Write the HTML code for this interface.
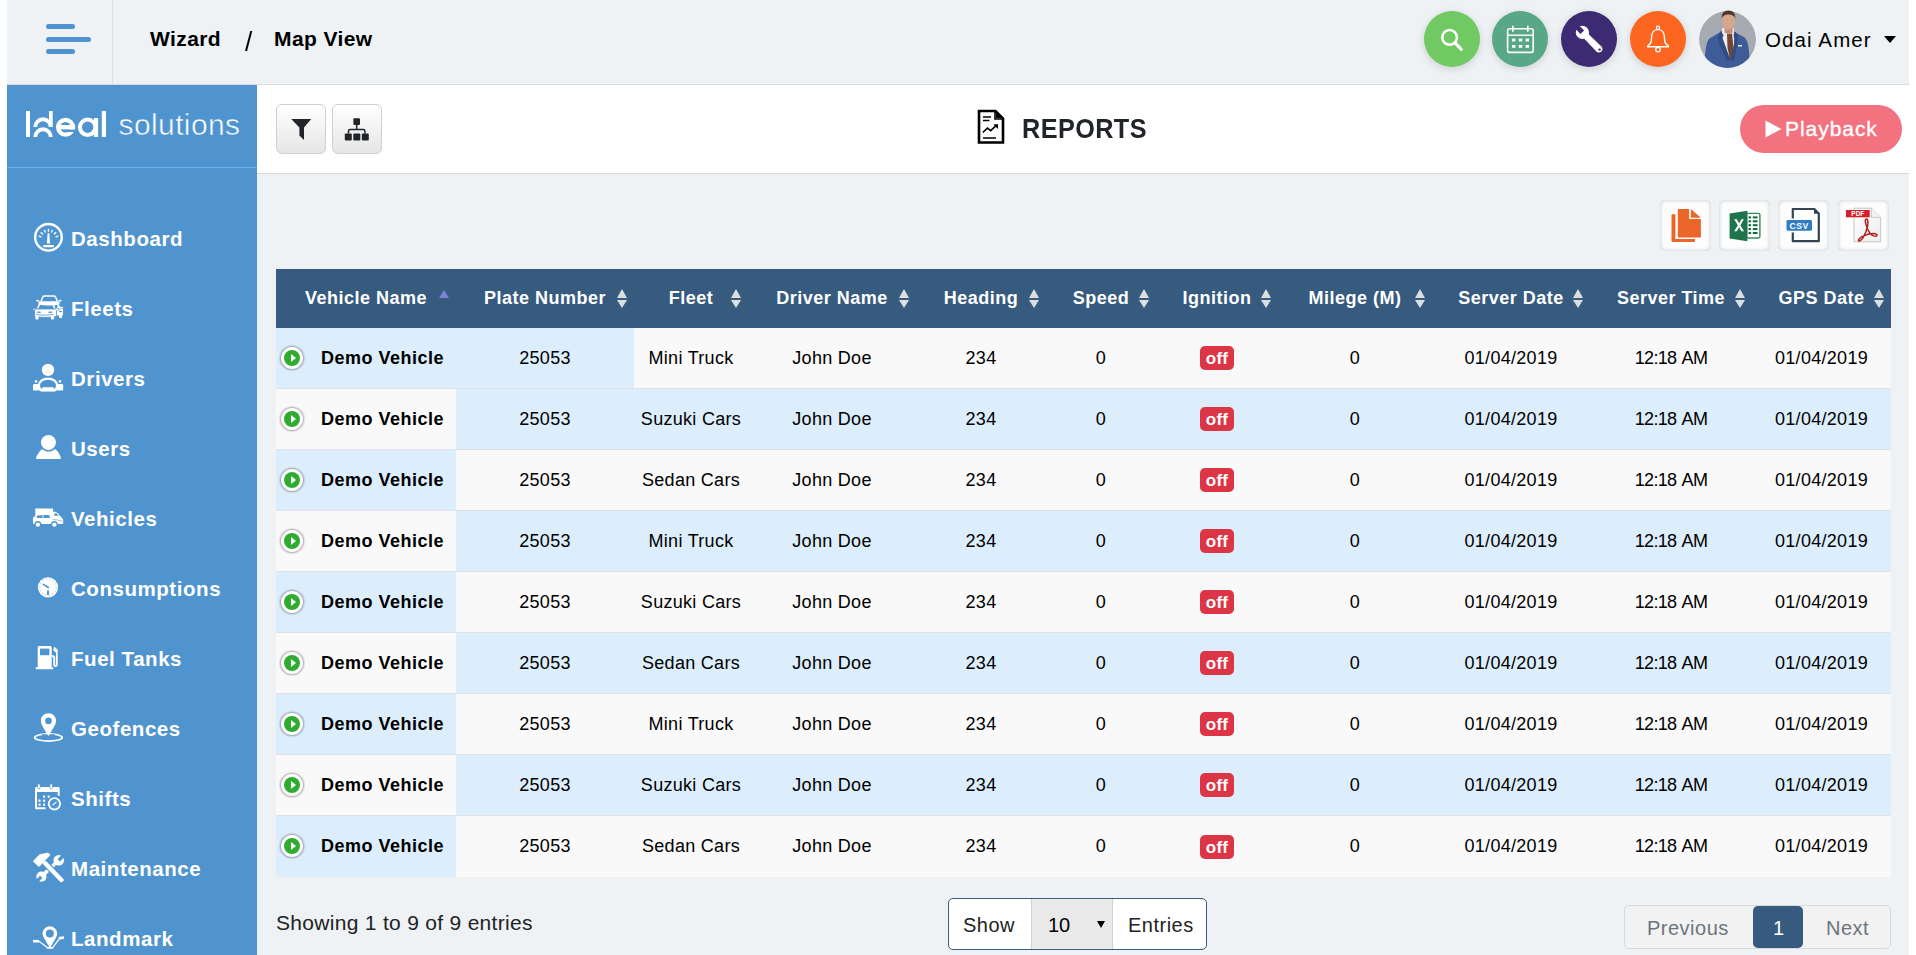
<!DOCTYPE html>
<html><head><meta charset="utf-8">
<style>
*{box-sizing:border-box;margin:0;padding:0}
html,body{width:1916px;height:955px;overflow:hidden;background:#fff;font-family:"Liberation Sans",sans-serif;color:#000}
.abs{position:absolute}
#hdr{position:absolute;left:7px;top:0;width:1902px;height:85px;background:#eef2f5;border-bottom:1px solid #d9dcde}
#hdr .vdiv{position:absolute;left:105px;top:0;width:1px;height:84px;background:#dcdfe2}
.ham{position:absolute;left:39px;height:5px;border-radius:2.5px;background:#4f93d0}
.crumb{position:absolute;top:27px;font-size:21px;font-weight:700;color:#000;white-space:nowrap;letter-spacing:.4px}
.circ{position:absolute;top:11px;width:56px;height:56px;border-radius:50%;box-shadow:0 2px 9px rgba(0,0,0,.14)}
.circ svg{position:absolute;left:0;top:0}
#side{position:absolute;left:7px;top:85px;width:250px;height:870px;background:#4f94cf}
#side .logo{position:absolute;left:0;top:0;width:250px;height:83px;border-bottom:1px solid #6ab3f1}
.mi{position:absolute;left:0;width:250px;height:40px}
.mi svg{position:absolute;left:26px;top:4px}
.mi span{position:absolute;left:64px;top:9.5px;font-size:20.5px;font-weight:700;color:#fff;white-space:nowrap;letter-spacing:.55px}
#topbar{position:absolute;left:257px;top:85px;width:1652px;height:89px;background:#fff;border-bottom:1px solid #dadada}
.tbtn{position:absolute;top:19px;width:50px;height:50px;border:1px solid #cfcfcf;border-radius:6px;background:linear-gradient(#fff,#e6e6e6)}
#content{position:absolute;left:257px;top:174px;width:1652px;height:781px;background:#eef2f5}
.xbtn{position:absolute;top:200px;width:51px;height:51px;background:#fdfdfd;border-radius:5px;box-shadow:inset 0 0 4px rgba(0,0,0,.22)}
.xbtn svg{position:absolute;left:0;top:0}
table{position:absolute;left:276px;top:269px;width:1615px;border-collapse:separate;border-spacing:0;table-layout:fixed}
th{height:59px;background:#365b7e;color:#fff;font-size:18px;font-weight:700;text-align:center;position:relative;white-space:nowrap;letter-spacing:.5px;padding:0}
td{height:61px;border-bottom:1px solid #dee2e6;font-size:18px;text-align:center;white-space:nowrap;color:#000;letter-spacing:.3px}
tr.o td{background:#f9f9f9}
tr.o td.b{background:#dcedfc}
tr.e td{background:#dcedfc}
tr.e td.g{background:#f9f9f9}
td.nm{font-weight:700;text-align:left;padding-left:45px;position:relative;letter-spacing:.5px}
.play{position:absolute;left:5px;top:19px;width:22px;height:22px;border-radius:50%;background:#fff;box-shadow:0 0 2px 1px rgba(0,0,0,.35)}
.play:before{content:"";position:absolute;left:3px;top:3px;width:16px;height:16px;border-radius:50%;background:#2fac2f}
.play:after{content:"";position:absolute;left:9.5px;top:7px;border-left:5.5px solid #fff;border-top:4px solid transparent;border-bottom:4px solid transparent}
.off{display:inline-block;background:#dc3545;color:#fff;font-weight:700;font-size:17px;border-radius:5px;padding:3px 6px 1px 6px;letter-spacing:.2px}
tbody tr:last-child td{border-bottom:none}
.asc{position:absolute;right:7px;top:21px;border-bottom:8.5px solid #7f80dc;border-left:5px solid transparent;border-right:5px solid transparent}
.sort{position:absolute;right:6px;top:20px;width:11px;height:19px}
.sort:before{content:"";position:absolute;left:0;top:0;border-bottom:9px solid #dcdedf;border-left:5.5px solid transparent;border-right:5.5px solid transparent}
.sort:after{content:"";position:absolute;left:0;top:10.8px;border-top:8.5px solid #dcdedf;border-left:5.5px solid transparent;border-right:5.5px solid transparent}
</style></head><body>

<div id="hdr">
  <div class="ham" style="top:24px;width:29px"></div>
  <div class="ham" style="top:37px;width:45px"></div>
  <div class="ham" style="top:49px;width:29px"></div>
  <div class="vdiv"></div>
</div>
<div class="crumb" style="left:150px">Wizard</div>
<div class="crumb" style="left:244.5px;top:25px;font-weight:400;font-size:25px;transform:scale(1.05,1.12);transform-origin:0 0">/</div>
<div class="crumb" style="left:274px">Map View</div>

<div class="circ" style="left:1424px;background:#71c963"><svg width="56" height="56" viewBox="0 0 56 56"><circle cx="25.6" cy="26.4" r="7.3" fill="none" stroke="#fff" stroke-width="2.5"/><path d="M30.8 31.6l6.5 6.8" stroke="#fff" stroke-width="3" stroke-linecap="round"/></svg></div>
<div class="circ" style="left:1492px;background:#59a885"><svg width="56" height="56" viewBox="0 0 56 56"><rect x="15.6" y="17.8" width="25.6" height="23.6" rx="2" fill="none" stroke="#fff" stroke-width="1.6"/><path d="M15.6 24.2h25.6" stroke="#fff" stroke-width="1.4"/><path d="M20.8 15.2v5M35.8 15.2v5" stroke="#fff" stroke-width="1.6" stroke-linecap="round"/><g fill="#fff"><rect x="20" y="27.6" width="3.4" height="2.8"/><rect x="26.8" y="27.6" width="3.4" height="2.8"/><rect x="33.6" y="27.6" width="3.4" height="2.8"/><rect x="20" y="34" width="3.4" height="2.8"/><rect x="26.8" y="34" width="3.4" height="2.8"/><rect x="33.6" y="34" width="3.4" height="2.8"/></g></svg></div>
<div class="circ" style="left:1561px;background:#3c2a72"><svg width="56" height="56" viewBox="0 0 56 56"><defs><mask id="wm"><rect width="56" height="56" fill="#fff"/><path d="M23.1 19.5L13.6 10 10 13.6 19.5 23.1z" fill="#000"/><circle cx="38.6" cy="38.6" r="1.2" fill="#000"/></mask></defs><g mask="url(#wm)" fill="#fff"><circle cx="21.4" cy="21.4" r="6.6"/><path d="M20.2 24.6l4.4-4.4 15.8 15.2c1.4 1.4 1.4 3.6 0 5s-3.6 1.4-5 0z"/></g></svg></div>
<div class="circ" style="left:1630px;background:#fd6620"><svg width="56" height="56" viewBox="0 0 56 56"><path d="M28 18.6c-3.6 0-6.2 2.8-6.4 6.6l-.3 4.8c-.2 2-1.5 3.6-3.7 5v.8h20.8v-.8c-2.2-1.4-3.5-3-3.7-5l-.3-4.8c-.2-3.8-2.8-6.6-6.4-6.6z" fill="none" stroke="#fff" stroke-width="1.4" stroke-linejoin="round"/><circle cx="28" cy="16.8" r="1.6" fill="none" stroke="#fff" stroke-width="1.2"/><circle cx="28" cy="38.6" r="2.3" fill="none" stroke="#fff" stroke-width="1.3"/></svg></div>
<div class="circ" style="left:1699px;top:11px;width:57px;height:57px;box-shadow:none"><svg width="57" height="57" viewBox="0 0 57 57" style="overflow:visible"><defs><clipPath id="avc"><circle cx="28.5" cy="28.5" r="28.4"/></clipPath></defs><g clip-path="url(#avc)"><rect width="57" height="57" fill="#a8aab1"/><path d="M4 60L7 36Q8.5 27 13 26L23 20L34.5 20.5L44 25.5Q48 27 49.5 36L52 60Z" fill="#3e5d98"/><path d="M23 17h11.8l.5 22-6 8-6.3-8z" fill="#ecebed"/><path d="M28 22.5h5l1.5 14-1 10.5-2.5 1.5-2.5-12z" fill="#734634"/><path d="M21.5 20l3 4-1 3 8 22-4 1-9-22z" fill="#2f4c84"/><path d="M36 20.5l-1.5 4 1.5 3-4 22 3 .5 4.5-25z" fill="#2f4c84"/><rect x="39" y="34" width="4" height="1.5" fill="#e5e5e5"/></g><path d="M25.5 13h8v8.5l-4 2-4-2z" fill="#c48f76"/><ellipse cx="29.4" cy="10.5" rx="6.5" ry="8.2" fill="#d5a78c"/><path d="M22.6 8Q22 -.5 29.4 -.6 36.8 -.5 36.4 8 35.5 3.5 29.4 3.5 23.5 3.5 22.6 8z" fill="#4f3829"/></svg></div>
<div class="abs" style="left:1765px;top:28px;font-size:20.5px;letter-spacing:1.1px;white-space:nowrap">Odai Amer</div>
<div class="abs" style="left:1884px;top:36px;border-top:7px solid #000;border-left:6px solid transparent;border-right:6px solid transparent"></div>

<div id="side">
  <div class="logo"></div>
  <svg class="abs" style="left:0;top:0" width="250" height="83" viewBox="7 85 250 83"><g fill="#fff"><rect x="26" y="111" width="4" height="26"/><rect x="49" y="111" width="3.7" height="16"/><path d="M33.3 127A9.7 9.7 0 0 1 52.7 127H48.8A5.8 5.8 0 0 0 37.2 127Z"/><path d="M33.3 137A9.7 9.7 0 0 1 52.7 137H48.8A5.8 5.8 0 0 0 37.2 137Z"/><rect x="93.9" y="118" width="4.2" height="19"/><rect x="101.8" y="111" width="4.2" height="26"/></g><g fill="none" stroke="#fff"><circle cx="65.5" cy="127.2" r="7.4" stroke-width="4.2"/><circle cx="87.6" cy="127.3" r="7.7" stroke-width="4"/></g><rect x="67" y="129.4" width="10" height="2.6" fill="#4f94cf"/><rect x="60" y="125" width="15.2" height="4.4" fill="#fff"/></svg>
  <div class="abs" style="left:111.5px;top:23px;font-size:30px;color:#fff;line-height:34px;letter-spacing:.4px;-webkit-text-stroke:.55px #4f94cf">solutions</div>
  <div class="mi" style="top:132px"><svg width="32" height="32" viewBox="0 0 32 32"><circle cx="15.45" cy="16.3" r="13.3" fill="none" stroke="#fff" stroke-width="2.4"/><path d="M7.74 15.70L6.05 15.08M9.49 12.87L8.18 11.64M12.20 10.97L11.49 9.32M15.45 10.30L15.45 8.50M18.70 10.97L19.41 9.32M21.41 12.87L22.72 11.64M23.16 15.70L24.85 15.08" stroke="#fff" stroke-width="1.5" stroke-linecap="round" opacity=".9"/><path d="M14.6 12.2h1.7l.7 10.3h-3.1z" fill="#fff"/><rect x="10.2" y="24" width="10.6" height="2.2" rx=".6" fill="#fff"/></svg><span>Dashboard</span></div>
  <div class="mi" style="top:202px"><svg width="32" height="32" viewBox="0 0 32 32"><g fill="none" stroke="#fff" stroke-width="1.5"><path d="M8 10.2l1.9-4.4c.3-.6.8-.9 1.5-.9h9.6c.7 0 1.2.3 1.5.9l1.9 4.4"/><path d="M24.6 13.5l2.6 4"/></g><path d="M5.5 10.2h21v3.2c-4 .8-9.5 1.1-10.5 1.1s-6.5-.3-10.5-1.1z" fill="#fff"/><ellipse cx="4.6" cy="9.6" rx="1.6" ry=".9" fill="#fff"/><ellipse cx="27.2" cy="9.6" rx="1.6" ry=".9" fill="#fff"/><path d="M22.5 17.5h7.5v7h-7.5z" fill="#fff"/><rect x="26" y="24" width="3" height="3" rx=".8" fill="#fff"/><ellipse cx="27.5" cy="20.5" rx="1.6" ry=".7" fill="#4f94cf"/><path d="M24 16.3l6 .2" stroke="#fff" stroke-width="1.3"/><g fill="none" stroke="#fff" stroke-width="1.5"><path d="M4.5 17.6l2-4.3c.3-.6.8-.9 1.5-.9h10.4c.7 0 1.2.3 1.5.9l2 4.3"/></g><ellipse cx="1.6" cy="18.3" rx="1.5" ry=".9" fill="#fff"/><ellipse cx="24.6" cy="18.3" rx="1.5" ry=".9" fill="#4f94cf" stroke="#4f94cf"/><path d="M1.5 18h22v7.5c-4 .7-9 .8-11 .8s-7-.1-11-.8z" fill="#fff" stroke="#4f94cf" stroke-width=".8"/><ellipse cx="24.2" cy="18.4" rx="1.4" ry=".9" fill="#fff"/><rect x="2.3" y="25" width="3.3" height="3.6" rx="1" fill="#fff"/><rect x="17.8" y="25" width="3.3" height="3.6" rx="1" fill="#fff"/><ellipse cx="6" cy="21.3" rx="2.2" ry=".75" fill="#4f94cf"/><ellipse cx="17.4" cy="21.3" rx="2.2" ry=".75" fill="#4f94cf"/><path d="M3 23.3c3.5 1 13.5 1 17.5 0" fill="none" stroke="#4f94cf" stroke-width=".8"/></svg><span>Fleets</span></div>
  <div class="mi" style="top:272px"><svg width="32" height="32" viewBox="0 0 32 32"><circle cx="15" cy="8.9" r="6.2" fill="#fff"/><ellipse cx="15" cy="24.5" rx="9.2" ry="6.8" fill="none" stroke="#fff" stroke-width="2.3"/><path d="M9.8 26.2L20.2 26.2 23.5 30.2H6.5z" fill="#fff"/><rect x="6.5" y="28" width="17" height="2.2" rx=".8" fill="#fff"/><rect x="-.2" y="23" width="6.4" height="6.4" rx="1.2" fill="#fff"/><rect x="23.8" y="23" width="6.4" height="6.4" rx="1.2" fill="#fff"/><circle cx="3" cy="20.4" r="1.3" fill="#fff"/><circle cx="27" cy="20.4" r="1.3" fill="#fff"/><rect x="0" y="30.6" width="30" height="2" fill="#4f94cf"/></svg><span>Drivers</span></div>
  <div class="mi" style="top:342px"><svg width="32" height="32" viewBox="0 0 32 32"><path d="M2.9 28c.4-3.6 3-7.6 6.2-10.1 1.7 1.7 3.9 2.6 6.35 2.6s4.65-.9 6.85-2.6c3.2 2.5 5.3 6.5 5.7 10.1z" fill="#fff"/><circle cx="15.45" cy="11.5" r="8.3" fill="#4f94cf" opacity=".5"/><circle cx="15.45" cy="11.5" r="7.5" fill="#fff"/></svg><span>Users</span></div>
  <div class="mi" style="top:412px"><svg width="32" height="32" viewBox="0 0 32 32"><path d="M2.3 7.5h17.8v3.3h1.2c1.5 0 2.6.6 3.5 1.5l4.5 5c.6.7.9 1.4.9 2.3v2.5c0 .6-.4 1-1 1H.8c-.5 0-.8-.3-.8-.8v-4.8c0-1 .6-1.8 1.5-2.1l.8-.3z" fill="#fff"/><path d="M3.8 14.8c3-.9 9.5-1 12.7-.5l.3 2.6H3.8z" fill="#4f94cf"/><path d="M10 14v3" stroke="#fff" stroke-width=".9"/><path d="M21.2 12.4h2.4l2.3 2.4h-4.7z" fill="#4f94cf"/><path d="M20 18.5c3 .2 6.5.8 9.5 1.6" stroke="#4f94cf" stroke-width=".6" fill="none"/><circle cx="4.9" cy="23.6" r="3.5" fill="#4f94cf"/><circle cx="4.9" cy="23.6" r="2.2" fill="#fff"/><circle cx="21.4" cy="23.6" r="3.5" fill="#4f94cf"/><circle cx="21.4" cy="23.6" r="2.2" fill="#fff"/></svg><span>Vehicles</span></div>
  <div class="mi" style="top:482px"><svg width="32" height="32" viewBox="0 0 32 32"><circle cx="15" cy="16.3" r="10.1" fill="#fff"/><circle cx="15" cy="16.3" r="8.2" fill="none" stroke="#4f94cf" stroke-opacity=".35" stroke-width="1.3" stroke-dasharray="1.6 2"/><path d="M10.4 13.4l4.9 3.1" stroke="#4f94cf" stroke-width="1.7" stroke-linecap="round"/><path d="M15 20.3v3" stroke="#4f94cf" stroke-width="1.9" stroke-linecap="round"/></svg><span>Consumptions</span></div>
  <div class="mi" style="top:552px"><svg width="32" height="32" viewBox="0 0 32 32"><g transform="translate(-1.3 1.3)"><path d="M6 5.5c0-1 .7-1.7 1.7-1.7h10.6c1 0 1.7.7 1.7 1.7V25h1.5v2H4v-2h2z" fill="#fff"/><rect x="8.3" y="6.3" width="9.4" height="6.6" fill="#4f94cf"/><path d="M22.5 4.2l3.5 3.2v14.8c0 1.5-.8 2.5-2.2 2.5s-2.2-1-2.2-2.5V15H20v-2h1.6c1 0 1.9.9 1.9 1.9v7.5c0 .4.2.6.4.6s.4-.2.4-.6V10.5l-2.8-2.6z" fill="#fff"/></g></svg><span>Fuel Tanks</span></div>
  <div class="mi" style="top:622px"><svg width="32" height="32" viewBox="0 0 32 32"><ellipse cx="15.45" cy="26.5" rx="13.8" ry="3.6" fill="none" stroke="#fff" stroke-width="1.7"/><path d="M9 23.6c2 .6 4.5.8 6.45.8s4.5-.2 6.45-.8" stroke="#4f94cf" stroke-width="2.2" fill="none" opacity=".75"/><path d="M15.45 2.3c-4.3 0-7.6 3.2-7.6 7.4 0 4.6 5 10.5 7.6 15.4 2.6-4.9 7.6-10.8 7.6-15.4 0-4.2-3.3-7.4-7.6-7.4z" fill="#fff"/><circle cx="15.45" cy="9.9" r="3.3" fill="#4f94cf"/></svg><span>Geofences</span></div>
  <div class="mi" style="top:692px"><svg width="32" height="32" viewBox="0 0 32 32"><path d="M2 7.5c0-1 .7-1.6 1.6-1.6h21.5c.9 0 1.6.6 1.6 1.6v7.3h-2V11H4v15.3h8.6v2H3.6c-.9 0-1.6-.6-1.6-1.6z" fill="#fff"/><rect x="4.6" y="2.8" width="2.6" height="5" rx="1.3" fill="#fff" stroke="#4f94cf" stroke-width=".7"/><rect x="16.9" y="2.8" width="2.6" height="5" rx="1.3" fill="#fff" stroke="#4f94cf" stroke-width=".7"/><g fill="#fff"><rect x="10" y="14.5" width="2.2" height="2.2" rx=".5"/><rect x="14.6" y="14.5" width="2.2" height="2.2" rx=".5"/><rect x="5.4" y="18.5" width="2.2" height="2.2" rx=".5"/><rect x="10" y="18.5" width="2.2" height="2.2" rx=".5"/><rect x="5.4" y="22.5" width="2.2" height="2.2" rx=".5"/><rect x="10" y="22.5" width="2.2" height="2.2" rx=".5"/></g><circle cx="21.4" cy="22.8" r="6.6" fill="#4f94cf"/><circle cx="21.4" cy="22.8" r="5.7" fill="none" stroke="#fff" stroke-width="1.8"/><path d="M19.8 24l3.4-2.8" stroke="#fff" stroke-width="1.1" stroke-linecap="round"/></svg><span>Shifts</span></div>
  <div class="mi" style="top:762px"><svg width="32" height="32" viewBox="0 0 32 32"><defs><mask id="mm"><rect width="32" height="32" fill="#fff"/><path d="M25.8 9.2l6-6" stroke="#000" stroke-width="3.4"/><path d="M8.2 25.9l-6 6" stroke="#000" stroke-width="3.4"/></mask></defs><g mask="url(#mm)" fill="#fff"><circle cx="25.8" cy="9.2" r="5.3"/><circle cx="8.4" cy="25.7" r="5.1"/><path d="M23.3 11.5L10.8 23.4" stroke="#fff" stroke-width="3.6"/></g><path d="M12.2 12.3L28.4 29" stroke="#4f94cf" stroke-width="6.6" stroke-linecap="round"/><path d="M12.2 12.3L28.4 29" stroke="#fff" stroke-width="4.4" stroke-linecap="round"/><path d="M.2 10.3L6.6 3.7 15.2 2 17.1 4 6 15.6z" fill="#fff" stroke="#fff" stroke-width=".8" stroke-linejoin="round"/></svg><span>Maintenance</span></div>
  <div class="mi" style="top:832px"><svg width="32" height="32" viewBox="0 0 32 32"><defs><mask id="lm"><rect width="32" height="32" fill="#fff"/><circle cx="16.85" cy="12.6" r="4" fill="#000"/></mask></defs><g mask="url(#lm)" fill="#fff"><circle cx="16.85" cy="12.6" r="7.35"/><path d="M10.6 16.2L17 27.3 23.1 16.2z"/></g><rect x="13.8" y="26" width="6.5" height="1.8" rx=".6" fill="#fff"/><path d="M0 20.2h6" stroke="#fff" stroke-width="2.6"/><path d="M6 20.2L14.3 26.6" stroke="#fff" stroke-width="1.3"/><path d="M19.6 26.6L26.2 18.2" stroke="#fff" stroke-width="1.3"/><path d="M25.8 17.4l5.2-.9" stroke="#fff" stroke-width="2.6"/></svg><span>Landmark</span></div>
</div>

<div id="topbar">
  <div class="tbtn" style="left:19px"><svg width="48" height="48" viewBox="0 0 48 48" style="position:absolute;left:0;top:0"><path d="M14.2 14h20L27 22.5V35l-4.6-4.6v-7.9z" fill="#212529"/></svg></div>
  <div class="tbtn" style="left:75px"><svg width="48" height="48" viewBox="0 0 48 48" style="position:absolute;left:0;top:0"><rect x="20.4" y="13.3" width="6.6" height="6.6" rx="1" fill="#212529"/><path d="M23.7 19.5v5M15.5 28.5v-2.6c0-.8.6-1.4 1.4-1.4h13.6c.8 0 1.4.6 1.4 1.4v2.6" fill="none" stroke="#212529" stroke-width="1.5"/><rect x="11.8" y="28.6" width="7" height="6.8" rx="1" fill="#212529"/><rect x="20.3" y="28.6" width="7" height="6.8" rx="1" fill="#212529"/><rect x="28.8" y="28.6" width="7" height="6.8" rx="1" fill="#212529"/></svg></div>
</div>
<svg class="abs" style="left:977px;top:109px" width="28" height="36" viewBox="0 0 28 36"><path d="M2 2h16.5L26 9.5V33.5H2z" fill="#fff" stroke="#000" stroke-width="2.6" stroke-linejoin="miter"/><path d="M18 2v8h8" fill="none" stroke="#000" stroke-width="1.6"/><path d="M19 2.5v6.5h6.5z" fill="#000"/><path d="M6 8h8M6 11.5h6.5M6 29h13" stroke="#000" stroke-width="1.6"/><path d="M5.8 23.5l4.6-4.4 3.3 2.6 5.3-5.1" fill="none" stroke="#000" stroke-width="1.6"/><path d="M16.3 15.3h4.7v4.7z" fill="#000"/></svg>
<div class="abs" style="left:1022px;top:113px;font-size:28px;font-weight:700;color:#212529;letter-spacing:.5px;transform:scaleX(.9);transform-origin:0 0">REPORTS</div>
<div class="abs" style="left:1740px;top:105px;width:162px;height:48px;border-radius:24px;background:#f3727f"><svg class="abs" style="left:24.5px;top:15px" width="17" height="18" viewBox="0 0 17 18"><path d="M0.5 0.5L16.5 9 0.5 17.5z" fill="#fff"/></svg><div class="abs" style="left:45px;top:12px;font-size:21px;color:#fff;letter-spacing:.95px;white-space:nowrap;-webkit-text-stroke:.35px #fff">Playback</div></div>

<div id="content"></div>
<div class="xbtn" style="left:1660px"><svg width="51" height="51" viewBox="0 0 51 51"><path d="M11.5 15.5c0-.8.5-1.3 1.3-1.3h2.6v24.6c0 .2.1.3.3.3h19.3v1.7c0 .8-.5 1.3-1.3 1.3H12.8c-.8 0-1.3-.5-1.3-1.3z" fill="#eb6628"/><path d="M17.8 10c0-.7.5-1.1 1.1-1.1h10.2v9.2c0 .6.4 1 1 1h10.8v17.4c0 .7-.4 1.1-1.1 1.1H18.9c-.6 0-1.1-.4-1.1-1.1z" fill="#eb6628"/><path d="M30.8 8.9l10.1 8.9H31.4c-.4 0-.6-.2-.6-.6z" fill="#eb6628"/></svg></div>
<div class="xbtn" style="left:1719px"><svg width="51" height="51" viewBox="0 0 51 51"><rect x="27.5" y="13.4" width="13.4" height="24.6" rx="1.4" fill="#fff" stroke="#3a8a5c" stroke-width="1.4"/><g fill="#0b6b38"><rect x="29.5" y="16.4" width="2.6" height="2"/><rect x="33.8" y="16.4" width="4.7" height="2"/><rect x="29.5" y="20.3" width="2.6" height="2"/><rect x="33.8" y="20.3" width="4.7" height="2"/><rect x="29.5" y="24.2" width="2.6" height="2"/><rect x="33.8" y="24.2" width="4.7" height="2"/><rect x="29.5" y="28.1" width="2.6" height="2"/><rect x="33.8" y="28.1" width="4.7" height="2"/><rect x="29.5" y="32" width="2.6" height="2"/><rect x="33.8" y="32" width="4.7" height="2"/></g><path d="M10.6 13.4L28.4 10.8V41.2L10.6 38.6z" fill="#1f744b"/><path d="M15.2 19.2h2.6l2.3 4 2.3-4h2.5l-3.5 6 3.6 6.1h-2.6l-2.3-4.1-2.3 4.1h-2.6l3.6-6.1z" fill="#fff"/></svg></div>
<div class="xbtn" style="left:1778px"><svg width="51" height="51" viewBox="0 0 51 51"><path d="M14.8 18.5V9h21.5l4.5 4.5V41.2H14.8V32.5" fill="none" stroke="#354453" stroke-width="2.2" stroke-linejoin="round"/><path d="M36 9.2v4.5h4.6z" fill="#354453"/><rect x="8.5" y="20" width="25.5" height="10.7" rx="1.4" fill="#2e7cc2"/><text x="21.2" y="28.6" text-anchor="middle" font-family="Liberation Sans" font-weight="700" font-size="8.6" fill="#fff" letter-spacing=".6">CSV</text></svg></div>
<div class="xbtn" style="left:1838px"><svg width="51" height="51" viewBox="0 0 51 51"><defs><linearGradient id="pg" x1="0" y1="0" x2="1" y2="1"><stop offset="0" stop-color="#fff"/><stop offset="1" stop-color="#ececec"/></linearGradient></defs><path d="M16 8.2h17.4l9.3 9.2V41.8H16z" fill="url(#pg)" stroke="#b9b9b9" stroke-width=".8"/><path d="M33.4 8.2v9.2h9.3" fill="#f3f3f3" stroke="#bdbdbd" stroke-width=".8"/><rect x="7.9" y="10" width="23.8" height="7.3" fill="#d32029"/><text x="19.8" y="16.2" text-anchor="middle" font-family="Liberation Sans" font-weight="700" font-size="6.5" fill="#fff">PDF</text><path d="M28.5 19c-1.6 0-1.4 2.6-.6 5.4.8 3 2.4 6.5 4.1 8.8 2 2.6 5.5 3.6 6.8 2.5 1-.9-.5-2.2-3.2-2.2-3.6 0-8.4 1.5-11.5 3.2-2.8 1.6-4.2 3.2-3.5 4 .8.9 2.8-.6 4.6-3.4 1.7-2.8 3.6-7.3 4.3-10.8.6-3.2.6-7.5-1-7.5z" fill="none" stroke="#b41f22" stroke-width="1.5"/></svg></div>

<!--TABLE-->
<table><colgroup>
<col style="width:180px">
<col style="width:178px">
<col style="width:114px">
<col style="width:168px">
<col style="width:130px">
<col style="width:110px">
<col style="width:122px">
<col style="width:154px">
<col style="width:158px">
<col style="width:162px">
<col style="width:139px">
</colgroup><thead><tr>
<th>Vehicle Name<span class="asc"></span></th>
<th>Plate Number<span class="sort"></span></th>
<th>Fleet<span class="sort"></span></th>
<th>Driver Name<span class="sort"></span></th>
<th>Heading<span class="sort"></span></th>
<th>Speed<span class="sort"></span></th>
<th>Ignition<span class="sort"></span></th>
<th>Milege (M)<span class="sort"></span></th>
<th>Server Date<span class="sort"></span></th>
<th>Server Time<span class="sort"></span></th>
<th>GPS Date<span class="sort"></span></th>
</tr></thead><tbody>
<tr class="o"><td class="nm b"><span class="play"></span>Demo Vehicle</td><td class="b">25053</td><td>Mini Truck</td><td>John Doe</td><td>234</td><td>0</td><td><span class="off">off</span></td><td>0</td><td>01/04/2019</td><td style="letter-spacing:-.7px;word-spacing:2px">12:18 AM</td><td>01/04/2019</td></tr>
<tr class="e"><td class="nm g"><span class="play"></span>Demo Vehicle</td><td>25053</td><td>Suzuki Cars</td><td>John Doe</td><td>234</td><td>0</td><td><span class="off">off</span></td><td>0</td><td>01/04/2019</td><td style="letter-spacing:-.7px;word-spacing:2px">12:18 AM</td><td>01/04/2019</td></tr>
<tr class="o"><td class="nm b"><span class="play"></span>Demo Vehicle</td><td>25053</td><td>Sedan Cars</td><td>John Doe</td><td>234</td><td>0</td><td><span class="off">off</span></td><td>0</td><td>01/04/2019</td><td style="letter-spacing:-.7px;word-spacing:2px">12:18 AM</td><td>01/04/2019</td></tr>
<tr class="e"><td class="nm g"><span class="play"></span>Demo Vehicle</td><td>25053</td><td>Mini Truck</td><td>John Doe</td><td>234</td><td>0</td><td><span class="off">off</span></td><td>0</td><td>01/04/2019</td><td style="letter-spacing:-.7px;word-spacing:2px">12:18 AM</td><td>01/04/2019</td></tr>
<tr class="o"><td class="nm b"><span class="play"></span>Demo Vehicle</td><td>25053</td><td>Suzuki Cars</td><td>John Doe</td><td>234</td><td>0</td><td><span class="off">off</span></td><td>0</td><td>01/04/2019</td><td style="letter-spacing:-.7px;word-spacing:2px">12:18 AM</td><td>01/04/2019</td></tr>
<tr class="e"><td class="nm g"><span class="play"></span>Demo Vehicle</td><td>25053</td><td>Sedan Cars</td><td>John Doe</td><td>234</td><td>0</td><td><span class="off">off</span></td><td>0</td><td>01/04/2019</td><td style="letter-spacing:-.7px;word-spacing:2px">12:18 AM</td><td>01/04/2019</td></tr>
<tr class="o"><td class="nm b"><span class="play"></span>Demo Vehicle</td><td>25053</td><td>Mini Truck</td><td>John Doe</td><td>234</td><td>0</td><td><span class="off">off</span></td><td>0</td><td>01/04/2019</td><td style="letter-spacing:-.7px;word-spacing:2px">12:18 AM</td><td>01/04/2019</td></tr>
<tr class="e"><td class="nm g"><span class="play"></span>Demo Vehicle</td><td>25053</td><td>Suzuki Cars</td><td>John Doe</td><td>234</td><td>0</td><td><span class="off">off</span></td><td>0</td><td>01/04/2019</td><td style="letter-spacing:-.7px;word-spacing:2px">12:18 AM</td><td>01/04/2019</td></tr>
<tr class="o"><td class="nm b"><span class="play"></span>Demo Vehicle</td><td>25053</td><td>Sedan Cars</td><td>John Doe</td><td>234</td><td>0</td><td><span class="off">off</span></td><td>0</td><td>01/04/2019</td><td style="letter-spacing:-.7px;word-spacing:2px">12:18 AM</td><td>01/04/2019</td></tr>
</tbody></table>
<!--/TABLE-->


<div class="abs" style="left:276px;top:911px;font-size:21px;color:#222;letter-spacing:.3px;white-space:nowrap">Showing 1 to 9 of 9 entries</div>
<div class="abs" style="left:948px;top:898px;width:259px;height:52px;border:1px solid #3b5f80;border-radius:5px;background:#fff;overflow:hidden">
  <div class="abs" style="left:14px;top:15px;font-size:20px;color:#222;letter-spacing:.5px">Show</div>
  <div class="abs" style="left:82px;top:0;width:82px;height:50px;background:#e9e9e9;border-left:1px solid #d0d0d0;border-right:1px solid #d0d0d0"></div>
  <div class="abs" style="left:99px;top:15px;font-size:20px;color:#000">10</div>
  <div class="abs" style="left:148px;top:22px;border-top:7px solid #000;border-left:4px solid transparent;border-right:4px solid transparent"></div>
  <div class="abs" style="left:179px;top:15px;font-size:20px;color:#222;letter-spacing:.5px">Entries</div>
</div>
<div class="abs" style="left:1624px;top:905px;width:267px;height:44px;border:1px solid #dadada;border-radius:5px;background:#f2f2f2">
  <div class="abs" style="left:22px;top:11px;font-size:20px;color:#6c757d;letter-spacing:.5px">Previous</div>
  <div class="abs" style="left:128px;top:0;width:50px;height:42px;background:#365b7e;border-radius:5px"></div>
  <div class="abs" style="left:148px;top:11px;font-size:20px;color:#fff">1</div>
  <div class="abs" style="left:201px;top:11px;font-size:20px;color:#6c757d;letter-spacing:.5px">Next</div>
</div>
</body></html>
